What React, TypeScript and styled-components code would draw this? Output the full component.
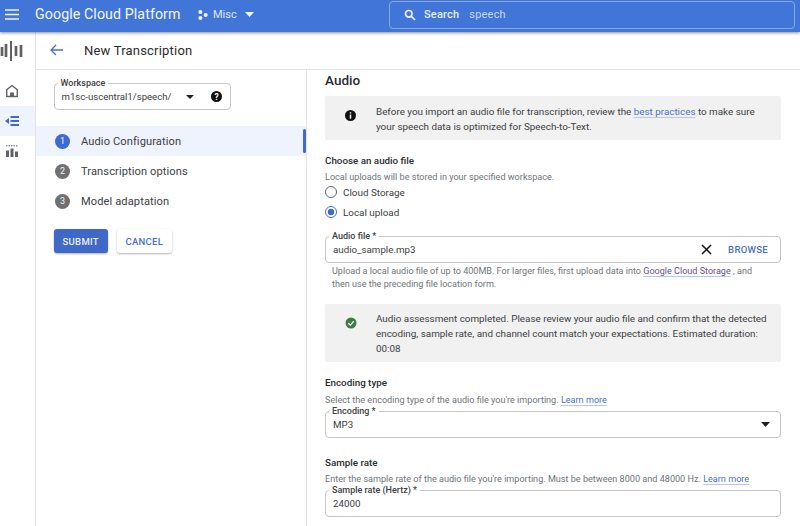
import React from "react";
import styled, { createGlobalStyle } from "styled-components";

const Global = createGlobalStyle`
  html, body { margin: 0; padding: 0; background: #fff; }
  body { font-family: Roboto, "Liberation Sans", sans-serif; color: #202124; -webkit-font-smoothing: antialiased; }
  * { box-sizing: border-box; }
`;

const Page = styled.div`
  width: 800px; height: 526px; overflow: hidden; display: flex; flex-direction: column; background: #fff;
`;
const TopBar = styled.header`
  height: 32px; flex: none; background: #4175d8; display: flex; align-items: flex-start; color: #fff;
  box-shadow: 0 1px 3px rgba(0,0,0,.45); position: relative; z-index: 2;
`;
const MenuButton = styled.div`
  width: 35px; height: 28px; display: flex; align-items: center; padding-left: 5px;
`;
const Brand = styled.div`
  font-size: 14.200px; line-height: 29px; width: 163px; color: #f4f7fd; letter-spacing: .1px;
`;
const Project = styled.div`
  display: flex; align-items: center; height: 29px; font-size: 11px; width: 191px; gap: 5px; color: #dbe6f9;
`;
const Caret = styled.svg<{ $ml?: number; $mr?: number }>`
  flex: none; margin-left: ${p => p.$ml ?? 0}px; margin-right: ${p => p.$mr ?? 0}px;
`;
const SearchBox = styled.div`
  width: 406px; height: 28px; margin-top: 1px; border: 1px solid #85a8e8; border-radius: 4px;
  display: flex; align-items: center; padding: 0 0 1px 14px; gap: 8px; font-size: 11px; color: #e6edfb;
`;
const SearchLabel = styled.span` font-weight: 500; letter-spacing: .2px; `;
const SearchValue = styled.span` color: #c6d7f5; margin-left: 2px; letter-spacing: .2px; `;

const Body = styled.div` flex: 1; display: flex; min-height: 0; `;
const Rail = styled.nav`
  width: 36px; flex: none; border-right: 1px solid #e4e4e4; display: flex; flex-direction: column;
`;
const RailLogo = styled.div`
  height: 38px; margin-bottom: 6px; display: flex; align-items: center;
`;
const RailItem = styled.div<{ $active?: boolean }>`
  height: 30px; display: flex; align-items: center; padding-left: 5px;
  background: ${p => (p.$active ? "#eef3fd" : "transparent")};
`;
const Main = styled.div` flex: 1; display: flex; flex-direction: column; min-width: 0; `;
const SubHeader = styled.div`
  height: 38px; flex: none; border-bottom: 1px solid #e4e4e4; display: flex; align-items: center; padding: 0 0 1px 14px;
`;
const Title = styled.h1`
  margin: 0 0 0 21px; font-size: 13px; font-weight: 400; color: #2a2b2e; letter-spacing: .2px;
`;
const Panels = styled.div` flex: 1; display: flex; min-height: 0; `;
const Side = styled.aside`
  width: 271px; flex: none; border-right: 1px solid #e4e4e4; padding-top: 13px; display: flex; flex-direction: column;
`;
const WorkspaceField = styled.div`
  position: relative; margin-left: 17.500px; width: 177.500px; height: 27px; border: 1px solid #c6c6c6; border-radius: 4px;
  display: flex; align-items: center; padding: 0 8px 0 7px; font-size: 9.600px; color: #3c4043;
`;
const FloatLabel = styled.span`
  position: absolute; left: 3px; top: -6px; padding: 0 3px; background: #fff; font-size: 9px; line-height: 11px; color: #3c4043; font-weight: 500; white-space: nowrap;
`;
const Spacer = styled.span` flex: 1; `;
const Steps = styled.ol` list-style: none; margin: 16px 0 0; padding: 0; `;
const Step = styled.li<{ $active?: boolean }>`
  position: relative; height: 30px; display: flex; align-items: center; padding-left: 19px; gap: 11px;
  font-size: 11.100px; color: #3c4043; letter-spacing: .1px;
  background: ${p => (p.$active ? "#eef3fd" : "transparent")};
`;
const StepBar = styled.span`
  position: absolute; right: 0; top: 3px; bottom: 3px; width: 3px; background: #3e6ad1; border-radius: 2px;
`;
const StepNum = styled.span<{ $active?: boolean }>`
  width: 15px; height: 15px; border-radius: 50%; color: #f4f4f4; font-size: 9px; display: flex; align-items: center; justify-content: center;
  background: ${p => (p.$active ? "#3e6ad1" : "#707070")};
`;
const Actions = styled.div` display: flex; gap: 8.500px; margin: 13px 0 0 17.500px; `;
const Button = styled.button<{ $primary?: boolean }>`
  height: 24px; border: 0; border-radius: 3px; font: 500 9.500px Roboto, sans-serif; letter-spacing: .3px; padding: 0;
  width: ${p => (p.$primary ? "54.500px" : "55.500px")};
  background: ${p => (p.$primary ? "#3f68c8" : "#fff")};
  color: ${p => (p.$primary ? "#eaf0fb" : "#4a70cd")};
  box-shadow: 0 1px 2px rgba(0,0,0,.3);
`;
const Content = styled.main` flex: 1; padding: 2px 19px 0 18px; min-width: 0; `;
const H2 = styled.h2` margin: 0; font-size: 13.500px; line-height: 16px; font-weight: 500; color: #2a2b2e; `;
const Notice = styled.div<{ $h: number; $mt: number }>`
  height: ${p => p.$h}px; margin-top: ${p => p.$mt}px; background: #f1f1f1; border-radius: 2px; display: flex; align-items: flex-start;
  font-size: 9.850px; line-height: 15px; color: #3c4043;
`;
const NoticeIcon = styled.div<{ $pt: number }>` width: 51px; flex: none; display: flex; justify-content: center; padding-top: ${p => p.$pt}px; `;
const NoticeText = styled.div<{ $pt: number }>` flex: 1; padding: ${p => p.$pt}px 12px 0 0; `;
const A = styled.a<{ $visited?: boolean }>`
  color: ${p => (p.$visited ? "#6a4ea8" : "#4a70cd")}; text-decoration: underline; text-decoration-color: #b9c8ea; text-underline-offset: 2px;
`;
const H3 = styled.h3<{ $mt: number }>`
  margin: ${p => p.$mt}px 0 0; font-size: 9.800px; line-height: 13px; font-weight: 500; color: #2a2b2e;
`;
const Hint = styled.p<{ $mt?: number }>`
  margin: ${p => p.$mt ?? 4}px 0 0; font-size: 9.100px; line-height: 12px; color: #70757a; white-space: nowrap;
`;
const Radio = styled.div<{ $mt: number }>`
  margin-top: ${p => p.$mt}px; display: flex; align-items: center; gap: 6px; height: 14px; font-size: 9.900px; color: #3c4043;
`;
const RadioDot = styled.span<{ $on?: boolean }>`
  width: 12px; height: 12px; border-radius: 50%; flex: none; border: 1px solid ${p => (p.$on ? "#3e6ad1" : "#5f6368")};
  background: ${p => (p.$on ? "radial-gradient(circle, #3e6ad1 0 3px, #fff 3.600px)" : "#fff")};
`;
const Field = styled.div<{ $mt: number }>`
  position: relative; margin-top: ${p => p.$mt}px; height: 27px; border: 1px solid #c6c6c6; border-radius: 4px;
  display: flex; align-items: center; padding: 0 10px 0 7px; font-size: 9.750px; color: #3c4043;
`;
const Browse = styled.span` color: #4a70cd; font-weight: 500; font-size: 9.600px; letter-spacing: .25px; margin: 0 2px 0 16px; `;
const HelpText = styled.p`
  margin: 2px 20px 0 7px; font-size: 9.050px; line-height: 12.500px; color: #70757a;
`;

export default function App() {
  return (
    <Page>
      <Global />
      <TopBar>
        <MenuButton>
          <svg width="14" height="11" viewBox="0 0 14 11"><path d="M0 1h14M0 5.500h14M0 10h14" stroke="#eef3fc" strokeWidth="1.400" /></svg>
        </MenuButton>
        <Brand>Google Cloud Platform</Brand>
        <Project>
          <svg width="10" height="10" viewBox="0 0 10 10" fill="#eef3fc"><circle cx="2.400" cy="2" r="2" /><circle cx="2.400" cy="8" r="2" /><circle cx="7.700" cy="5" r="2" /></svg>
          <span>Misc</span>
          <Caret width="9" height="5" viewBox="0 0 9 5" $ml={3}><path d="M0 0h9L4.500 5z" fill="#eef3fc" /></Caret>
        </Project>
        <SearchBox>
          <svg width="12" height="12" viewBox="0 0 12 12" fill="none" stroke="#eef3fc" strokeWidth="1.700"><circle cx="4.800" cy="4.800" r="3.300" /><path d="M7.400 7.400 11 11" /></svg>
          <SearchLabel>Search</SearchLabel>
          <SearchValue>speech</SearchValue>
        </SearchBox>
      </TopBar>
      <Body>
        <Rail>
          <RailLogo>
            <svg width="24" height="22" viewBox="0 0 24 22" fill="none" stroke="#616161"><path d="M2 7v9M6 4v13M16 6v10M21 5v12" strokeWidth="2.700" /><path d="M11 1v20" strokeWidth="2" /></svg>
          </RailLogo>
          <RailItem>
            <svg width="14" height="14" viewBox="0 0 14 14" fill="none" stroke="#5f6368" strokeWidth="1.400"><path d="M1.700 5.700 7 1.500l5.300 4.200v6.800H1.700z" strokeLinejoin="round" /><path d="M5 12.500V8.500h4v4" fill="#5f6368" stroke="none" /></svg>
          </RailItem>
          <RailItem $active>
            <svg width="14" height="10" viewBox="0 0 14 10" fill="#3e6ad1"><path d="M5.500 0H14v2H5.500zM5.500 4H14v2H5.500zM5.500 8H14v2H5.500zM0 5l4-3v6z" /></svg>
          </RailItem>
          <RailItem>
            <svg width="14" height="12" viewBox="0 0 14 12" fill="#5f6368"><path d="M1 5.500h3V12H1zM5.500 3.500h3V12h-3zM10 6.500h3V12h-3z" /><path d="M1 .8h12" stroke="#5f6368" strokeDasharray="1.500 1" /></svg>
          </RailItem>
        </Rail>
        <Main>
          <SubHeader>
            <svg width="13" height="12" viewBox="0 0 13 12" fill="none" stroke="#4a70cd" strokeWidth="1.300"><path d="M13 6H1M6 1 1 6l5 5" /></svg>
            <Title>New Transcription</Title>
          </SubHeader>
          <Panels>
            <Side>
              <WorkspaceField>
                <FloatLabel>Workspace</FloatLabel>
                <span>m1sc-uscentral1/speech/</span>
                <Spacer />
                <Caret width="8" height="4" viewBox="0 0 8 4" $mr={17}><path d="M0 0h8L4 4z" fill="#202124" /></Caret>
                <svg width="11" height="11" viewBox="0 0 11 11"><circle cx="5.500" cy="5.500" r="5.500" fill="#111" /><text x="5.500" y="8.500" fontSize="8.500" fontWeight="700" textAnchor="middle" fill="#fff" fontFamily="Roboto">?</text></svg>
              </WorkspaceField>
              <Steps>
                <Step $active><StepNum $active>1</StepNum>Audio Configuration<StepBar /></Step>
                <Step><StepNum>2</StepNum>Transcription options</Step>
                <Step><StepNum>3</StepNum>Model adaptation</Step>
              </Steps>
              <Actions>
                <Button $primary>SUBMIT</Button>
                <Button>CANCEL</Button>
              </Actions>
            </Side>
            <Content>
              <H2>Audio</H2>
              <Notice $h={44} $mt={8}>
                <NoticeIcon $pt={14}>
                  <svg width="11" height="11" viewBox="0 0 11 11"><circle cx="5.500" cy="5.500" r="5.500" fill="#111" /><path d="M4.800 2.200h1.400v1.400H4.800zM4.800 4.600h1.400v4.200H4.800z" fill="#fff" /></svg>
                </NoticeIcon>
                <NoticeText $pt={8}>
                  Before you import an audio file for transcription, review the <A>best practices</A> to make sure your speech data is optimized for Speech-to-Text.
                </NoticeText>
              </Notice>
              <H3 $mt={14}>Choose an audio file</H3>
              <Hint>Local uploads will be stored in your specified workspace.</Hint>
              <Radio $mt={2}><RadioDot />Cloud Storage</Radio>
              <Radio $mt={6}><RadioDot $on />Local upload</Radio>
              <Field $mt={17}>
                <FloatLabel>Audio file *</FloatLabel>
                <span>audio_sample.mp3</span>
                <Spacer />
                <svg width="11" height="11" viewBox="0 0 11 11"><path d="M1 1l9 9M10 1l-9 9" stroke="#111" strokeWidth="1.500" /></svg>
                <Browse>BROWSE</Browse>
              </Field>
              <HelpText>
                Upload a local audio file of up to 400MB. For larger files, first upload data into <A $visited>Google Cloud Storage</A> , and then use the preceding file location form.
              </HelpText>
              <Notice $h={58} $mt={14}>
                <NoticeIcon $pt={13}>
                  <svg width="12" height="12" viewBox="0 0 12 12"><circle cx="6" cy="6" r="5.500" fill="#3d7d43" /><path d="M3.300 6.100l2 2 3.500-3.800" fill="none" stroke="#fff" strokeWidth="1.300" /></svg>
                </NoticeIcon>
                <NoticeText $pt={7}>
                  Audio assessment completed. Please review your audio file and confirm that the detected encoding, sample rate, and channel count match your expectations. Estimated duration: 00:08
                </NoticeText>
              </Notice>
              <H3 $mt={14}>Encoding type</H3>
              <Hint $mt={5}>Select the encoding type of the audio file you're importing. <A>Learn more</A></Hint>
              <Field $mt={5}>
                <FloatLabel>Encoding *</FloatLabel>
                <span>MP3</span>
                <Spacer />
                <svg width="9" height="5" viewBox="0 0 9 5"><path d="M0 0h9L4.500 5z" fill="#202124" /></svg>
              </Field>
              <H3 $mt={18}>Sample rate</H3>
              <Hint>Enter the sample rate of the audio file you're importing. Must be between 8000 and 48000 Hz. <A>Learn more</A></Hint>
              <Field $mt={5}>
                <FloatLabel>Sample rate (Hertz) *</FloatLabel>
                <span>24000</span>
              </Field>
            </Content>
          </Panels>
        </Main>
      </Body>
    </Page>
  );
}
